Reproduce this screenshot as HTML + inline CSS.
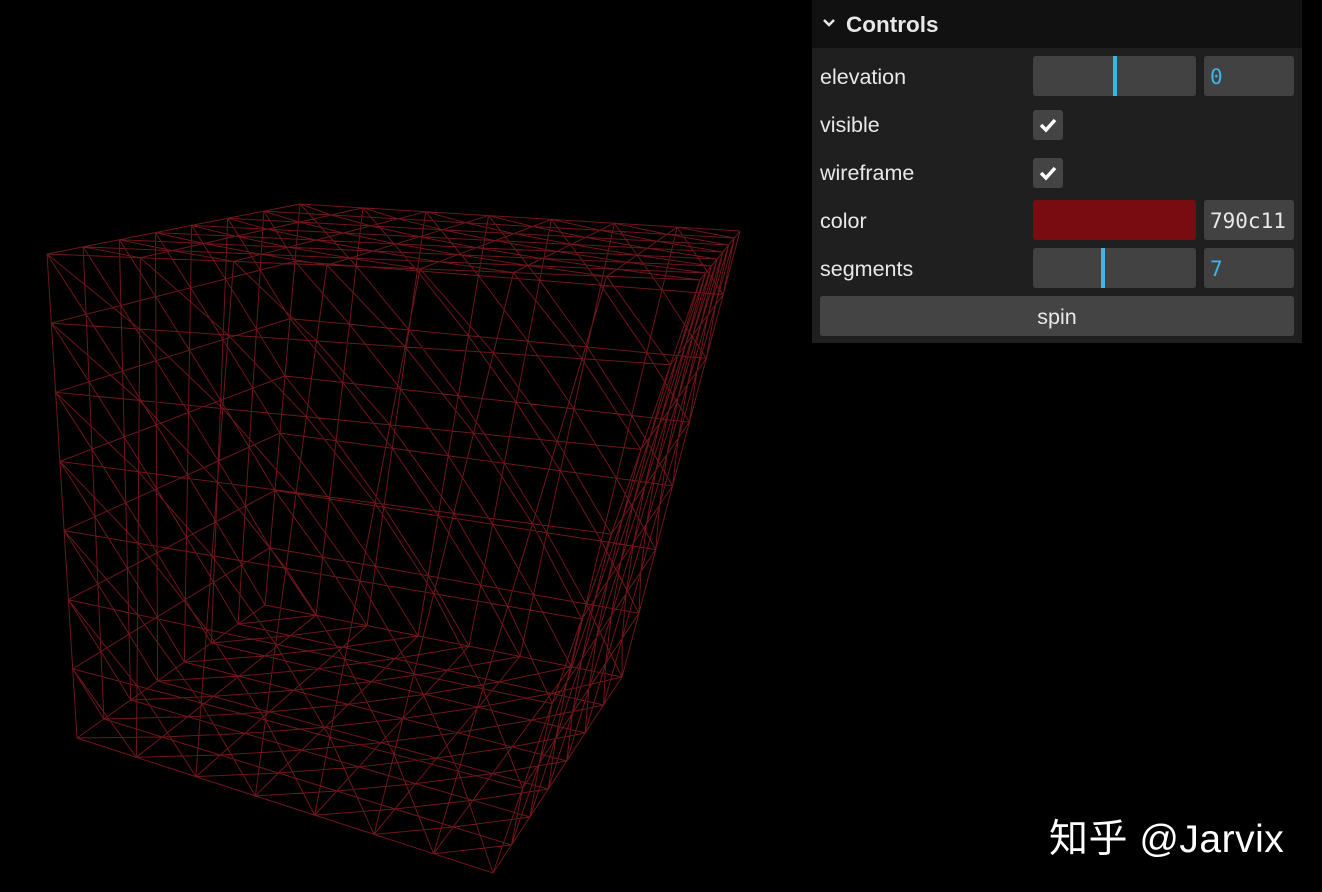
<!DOCTYPE html>
<html><head><meta charset="utf-8">
<style>
html,body{margin:0;padding:0;background:#000;width:1322px;height:892px;overflow:hidden;font-family:"Liberation Sans","Noto Sans CJK SC",sans-serif;}
#cv{position:absolute;left:0;top:0}
.panel{position:absolute;left:812px;top:0;width:490px;height:343px;background:#1f1f1f;color:#e8e8e8;}
.hdr{height:48px;background:#111;font-weight:bold;font-size:22.5px;line-height:49px;padding-left:34px;position:relative;}
.hdr svg{position:absolute;left:10px;top:18px}
.row{position:absolute;left:8px;font-size:21.5px;height:40px;line-height:42px;}
.sl{position:absolute;left:221px;width:163px;height:40px;background:#424242;border-radius:3px;}
.sl i{position:absolute;top:0;width:4px;height:40px;background:#3db5ea}
.tx{position:absolute;left:392px;width:90px;height:40px;background:#424242;border-radius:3px;font-family:"DejaVu Sans Mono","Liberation Mono",monospace;font-size:21px;line-height:42px;padding-left:6px;box-sizing:border-box;}
.cb{position:absolute;left:221px;width:30px;height:30px;background:#444;border-radius:3px;}
.btn{position:absolute;left:8px;top:296px;width:474px;height:40px;background:#444;border-radius:3px;text-align:center;line-height:42px;font-size:21.5px;}
.wm{position:absolute;left:1049px;top:808px;color:#fff;font-size:39px;letter-spacing:0.5px;}
</style></head><body>
<svg id="cv" width="1322" height="892"></svg>
<div class="panel">
<div class="hdr"><svg width="14" height="10" viewBox="0 0 14 10"><path d="M2 2 L7 7 L12 2" stroke="#e8e8e8" stroke-width="2.5" fill="none"/></svg>Controls</div>
<div class="row" style="top:56px">elevation</div>
<div class="sl" style="top:56px"><i style="left:80px"></i></div>
<div class="tx" style="top:56px;color:#3db5ea">0</div>
<div class="row" style="top:104px">visible</div>
<div class="cb" style="top:110px"><svg width="30" height="30"><path d="M8 15 L13 20 L22 10" stroke="#fff" stroke-width="3.5" fill="none"/></svg></div>
<div class="row" style="top:152px">wireframe</div>
<div class="cb" style="top:158px"><svg width="30" height="30"><path d="M8 15 L13 20 L22 10" stroke="#fff" stroke-width="3.5" fill="none"/></svg></div>
<div class="row" style="top:200px">color</div>
<div class="sl" style="top:200px;background:#790c11"></div>
<div class="tx" style="top:200px;color:#e8e8e8">790c11</div>
<div class="row" style="top:248px">segments</div>
<div class="sl" style="top:248px"><i style="left:68px"></i></div>
<div class="tx" style="top:248px;color:#3db5ea">7</div>
<div class="btn">spin</div>
</div>
<div class="wm">知乎 @Jarvix</div>
<script>
var A=[47,254],B=[77,738],C=[493,873],D=[622,677],E=[740,231],F=[300,204],G=[700,280],H=[265,605];
var faces=[[A,G,C,B],[G,E,D,C],[F,E,G,A],[F,E,D,H],[A,F,H,B],[B,C,D,H]];
var N=7,s='';
function p(f,u,v){return [(1-u)*(1-v)*f[0][0]+u*(1-v)*f[1][0]+u*v*f[2][0]+(1-u)*v*f[3][0],(1-u)*(1-v)*f[0][1]+u*(1-v)*f[1][1]+u*v*f[2][1]+(1-u)*v*f[3][1]];}
function L(a,b){s+='M'+a[0].toFixed(1)+' '+a[1].toFixed(1)+'L'+b[0].toFixed(1)+' '+b[1].toFixed(1);}
faces.forEach(function(f){for(var i=0;i<N;i++)for(var j=0;j<N;j++){var u0=i/N,u1=(i+1)/N,v0=j/N,v1=(j+1)/N;
var a=p(f,u0,v0),b=p(f,u1,v0),c=p(f,u1,v1),d=p(f,u0,v1);L(a,b);L(b,c);L(c,d);L(d,a);L(a,c);}});
document.getElementById('cv').innerHTML='<path d="'+s+'" stroke="#6e161a" stroke-width="1" fill="none"/>';
</script>
</body></html>
